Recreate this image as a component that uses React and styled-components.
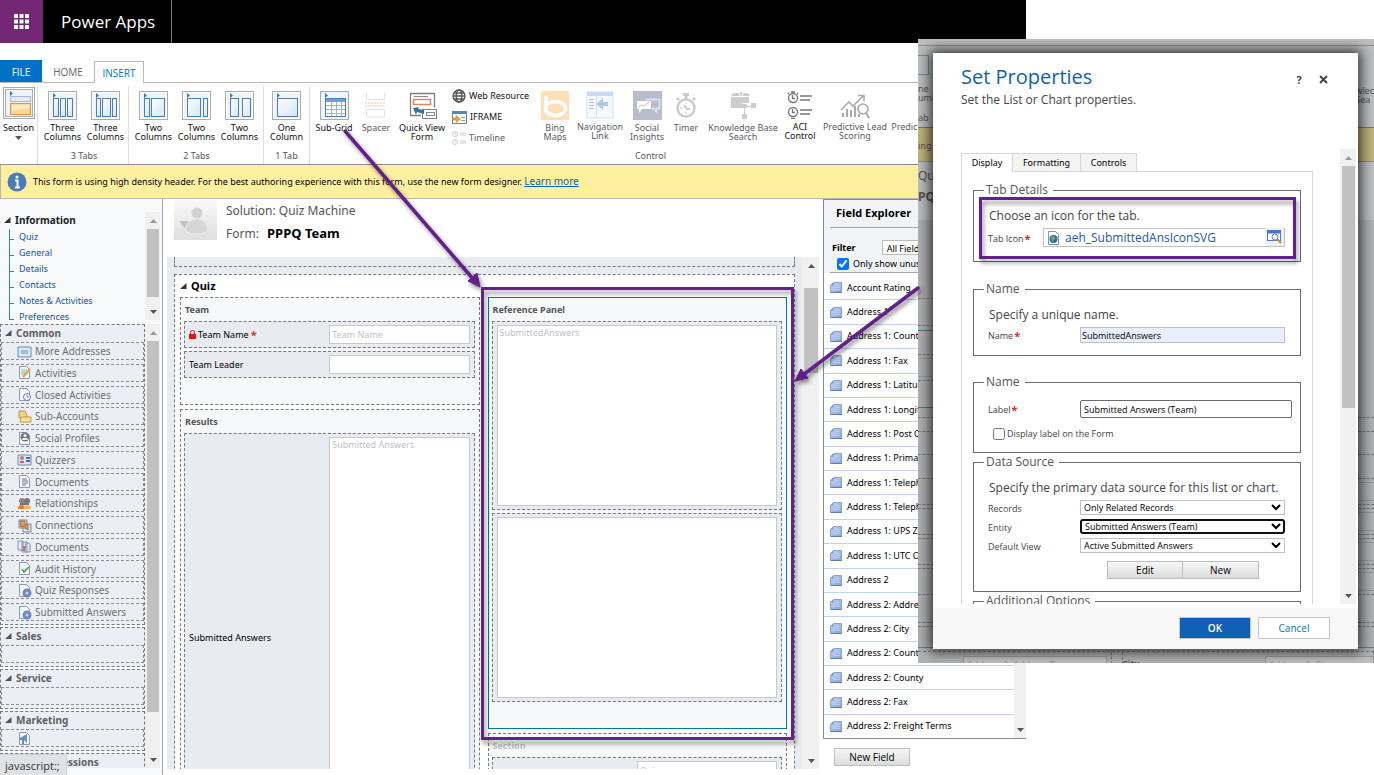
import React from "react";
import styled, { createGlobalStyle, css } from "styled-components";

const GlobalStyle = createGlobalStyle`
  *, *::before, *::after { box-sizing: border-box; }
  body { margin: 0; background: #fff; color: #000; font: 10px/12px "Segoe UI", "Noto Sans", "Open Sans", sans-serif; overflow: hidden; }
  button, input, select, textarea { font: inherit; color: inherit; margin: 0; }
  h1, h2, h3, p, ul { margin: 0; padding: 0; }
  ul { list-style: none; }
`;

const dash = "1px dashed #7a7a7a";
const PURPLE = "#61208a";
const OPEN = '"Segoe UI", "Open Sans", sans-serif';

/* ---------- page frame ---------- */
const Page = styled.div`
  position: relative;
  height: 100vh;
  overflow: hidden;
`;
const Main = styled.div`
  height: 100%;
  margin-right: 348px;
  display: flex;
  flex-direction: column;
  overflow: hidden;
`;
const TopBar = styled.header`
  flex: none;
  display: flex;
  height: 43px;
  background: #000;
  color: #fff;
`;
const Waffle = styled.button`
  width: 43px;
  border: 0;
  padding: 0;
  display: grid;
  place-items: center;
  background: #742774;
`;
const Brand = styled.div`
  width: 129px;
  padding-left: 18px;
  border-right: 1px solid #777;
  font-family: ${OPEN};
  font-size: 17px;
  line-height: 43px;
  white-space: nowrap;
`;

/* ---------- ribbon ---------- */
const TabRow = styled.nav`
  flex: none;
  display: flex;
  align-items: flex-end;
  height: 40px;
  border-bottom: 1px solid #b6babf;
`;
const RibbonTab = styled.button`
  height: 22px;
  padding: 1px 0 0;
  width: ${(p) => p.$w}px;
  border: 1px solid transparent;
  border-bottom: 0;
  background: none;
  font-family: ${OPEN};
  color: #666;
  ${(p) => p.$kind === "file" && css`background: #0072c6; color: #fff; border-color: #0072c6;`}
  ${(p) => p.$kind === "active" && css`background: #fff; color: #0072c6; border-color: #b6babf; margin-bottom: -1px;`}
`;
const Ribbon = styled.div`
  flex: none;
  display: flex;
  height: 82px;
  padding: 3px 0 0;
  overflow: hidden;
  border-bottom: 1px solid #8a8d92;
`;
const Group = styled.section`
  flex: none;
  display: flex;
  flex-direction: column;
  justify-content: space-between;
  padding: ${(p) => p.$pad || 0};
  border-right: 1px solid #dcdfe2;
`;
const Tools = styled.div`
  display: flex;
`;
const GroupName = styled.h3`
  font-weight: 400;
  font-size: 9px;
  line-height: 12px;
  color: #555;
  text-align: center;
  height: 14px;
`;
const Tool = styled.button`
  width: ${(p) => p.$w}px;
  border: 0;
  background: none;
  padding: 5px 0 0;
  display: flex;
  flex-direction: column;
  align-items: center;
  gap: 3px;
  font-size: 9px;
  line-height: 9px;
  white-space: pre;
  color: ${(p) => (p.$off ? "#5b5b66" : "#111")};
  & > svg { flex: none; }
`;
const SectionTool = styled(Tool)`
  padding-top: 1px;
  gap: 4px;
`;
const ToolFrame = styled.span`
  border: 1px solid #a9a9a9;
  padding: 1px;
  display: block;
  svg { display: block; }
`;
const SmallTools = styled.div`
  width: 91px;
  padding: 2px 0 0 5px;
  display: flex;
  flex-direction: column;
  gap: 5px;
`;
const SmallTool = styled.button`
  display: flex;
  align-items: center;
  gap: 3px;
  height: 16px;
  border: 0;
  padding: 0;
  background: none;
  font-size: 9px;
  white-space: nowrap;
  color: ${(p) => (p.$off ? "#5b5b66" : "#111")};
`;
const Notice = styled.div`
  flex: none;
  height: 34px;
  display: flex;
  align-items: center;
  gap: 6px;
  padding-left: 6px;
  background: #fff0a0;
  border-left: 1px solid #b5b5b5;
  border-bottom: 1px solid #b8b8b8;
  font-size: 9px;
  white-space: nowrap;
  a { color: #0066b8; font-size: 10px; }
`;

/* ---------- body ---------- */
const Body = styled.div`
  flex: 1;
  min-height: 0;
  display: flex;
`;
const Sidebar = styled.aside`
  flex: none;
  width: 163px;
  border-right: 1px solid #a0a7b0;
  background: #f7f9fb;
  padding: 13px 2px 7px 0;
  display: flex;
  flex-direction: column;
  gap: 4px;
`;
const Pane = styled.div`
  display: flex;
  min-height: 0;
  overflow: hidden;
  ${(p) => (p.$grow ? "flex: 1;" : "flex: none; height: 108px;")}
`;
const PaneContent = styled.div`
  flex: 1;
  min-width: 0;
  overflow: hidden;
`;
const Heading = styled.h2`
  display: flex;
  align-items: center;
  gap: 4px;
  padding-left: 4px;
  height: 16px;
  margin-bottom: 1px;
  font-size: 10px;
  font-weight: 700;
  color: ${(p) => (p.$dim ? "#5e6063" : "#222")};
`;
const Tree = styled.ul`
  margin-left: 9px;
  border-left: 1px solid #1e88d2;
  li { display: flex; align-items: center; height: 16px; }
  li::before { content: ""; width: 4px; height: 1px; margin: 5px 5px 0 0; background: #1e88d2; }
  a { color: #1353a8; font-size: 9px; text-decoration: none; white-space: nowrap; }
`;
const NavGroup = styled.section`
  border: ${dash};
  margin-bottom: 2px;
  background: #ebeff5;
`;
const NavItems = styled.ul`
  display: flex;
  flex-direction: column;
  justify-content: space-between;
  height: ${(p) => (p.$n > 1 ? 279 : 18)}px;
  margin-bottom: 3px;
`;
const NavItem = styled.li`
  display: flex;
  align-items: center;
  gap: 3px;
  height: 18px;
  padding-left: 15px;
  border: 1px dashed #8d8f92;
  color: #6e7073;
  font-size: 10px;
  white-space: nowrap;
`;

const Bar = styled.div`
  flex: none;
  width: ${(p) => p.$w || 15}px;
  padding: 0 1px 0 2px;
  display: flex;
  flex-direction: column;
  background: #f0f0f0;
`;
const Arrow = styled.span`
  flex: none;
  height: 17px;
  display: grid;
  place-items: center;
`;
const Thumb = styled.span`
  flex: ${(p) => p.$size} 1 0;
  background: #c1c1c1;
`;
const Rest = styled.span`
  flex: ${(p) => p.$size} 1 0;
`;

const Editor = styled.main`
  flex: 1;
  min-width: 0;
  padding: 0 4px 6px;
  display: flex;
  flex-direction: column;
`;
const FormHead = styled.div`
  flex: none;
  display: flex;
  gap: 9px;
  height: 58px;
  padding: 1px 0 0 7px;
  color: #555;
  font-size: 12px;
  line-height: 22px;
  b { color: #000; font-size: 13px; margin-left: 5px; }
`;
const Canvas = styled.div`
  flex: 1;
  min-height: 0;
  display: flex;
  overflow: hidden;
  background: #e8ebf0;
`;
const CanvasBody = styled.div`
  flex: 1;
  min-width: 0;
  overflow: hidden;
  padding: 0 7px;
`;
const Stub = styled.div`
  height: 10px;
  border: ${dash};
  border-top: 0;
  margin-bottom: 7px;
`;
const FormTab = styled.div`
  border: ${dash};
  border-bottom: 0;
  background: #fff;
  padding: 0 7px 0 5px;
  min-height: 600px;
`;
const FormTabTitle = styled.h2`
  display: flex;
  align-items: center;
  gap: 4px;
  height: 22px;
  font-size: 11px;
`;
const Columns = styled.div`
  display: grid;
  grid-template-columns: 1fr 1fr;
  gap: 8px;
`;
const Column = styled.div`
  display: flex;
  flex-direction: column;
  gap: 4px;
`;
const Section = styled.section`
  position: relative;
  background: #f7f8fa;
  border: ${(p) => (p.$selected ? "1px solid #0078a8" : dash)};
  padding: 4px 4px 26px 3px;
  display: flex;
  flex-direction: column;
  gap: 3px;
  & > h3 { font-size: 9px; line-height: 16px; color: ${(p) => (p.$dim ? "#c4c4c4" : "#555")}; padding-left: 1px; }
`;
const Field = styled.div`
  display: flex;
  align-items: center;
  height: ${(p) => p.$h}px;
  border: ${dash};
  background: #e8ebf0;
  padding: 3px 4px;
  font-size: 9px;
  & > label { flex: 1; display: flex; align-items: center; gap: 2px; }
  & > input, & > textarea {
    width: ${(p) => (p.$full ? "100%" : "50%")};
    height: 100%;
    border: 1px solid #c6c8cb;
    padding: 1px 2px;
    background: #fff;
    resize: none;
    font-size: 9px;
    border-radius: 0;
  }
  ::placeholder { color: #c2c2c2; }
`;
const Star = styled.span`
  color: #c33;
  font-weight: 700;
  align-self: flex-start;
  font-size: 11px;
  line-height: 11px;
`;

const Highlight = styled.div`
  position: absolute;
  inset: ${(p) => p.$inset};
  border: 3px solid ${PURPLE};
  filter: drop-shadow(2px 4px 2px rgba(0, 0, 0, 0.4));
  pointer-events: none;
  z-index: 2;
`;

/* ---------- field explorer ---------- */
const Side = styled.aside`
  flex: none;
  width: 203px;
  display: flex;
  flex-direction: column;
`;
const Explorer = styled.div`
  flex: 1;
  min-height: 0;
  display: flex;
  flex-direction: column;
  border: 1px solid #838a96;
  border-right: 0;
  background: #f2f3f6;
`;
const ExplorerTop = styled.div`
  flex: none;
  height: 73px;
  margin-left: 6px;
  padding-top: 5px;
  border-bottom: 1px solid #a2a6ad;
  font-size: 9px;
  h2 { font-size: 11px; font-family: ${OPEN}; line-height: 16px; height: 23px; padding-left: 6px; border-bottom: 1px solid #a2a6ad; }
`;
const FilterRow = styled.div`
  display: flex;
  align-items: center;
  gap: 26px;
  padding: 12px 0 1px 2px;
  label { font-weight: 700; font-size: 9px; }
  select { width: 120px; height: 15px; border: 1px solid #bbb; background: #fff; padding: 0; font-size: 9px; }
`;
const CheckRow = styled.label`
  display: flex;
  align-items: center;
  gap: ${(p) => p.$gap || 5}px;
  padding-left: ${(p) => p.$pad}px;
  height: 16px;
  color: ${(p) => p.$color || "#000"};
  font-size: 9px;
  input { width: 12px; height: 12px; }
`;
const FieldArea = styled.div`
  flex: 1;
  min-height: 0;
  display: flex;
  background: #fff;
`;
const FieldList = styled.ul`
  flex: 1;
  display: flex;
  flex-direction: column;
  padding-top: 3px;
  li {
    flex: 1 1 0;
    display: flex;
    align-items: center;
    gap: 5px;
    padding-left: 6px;
    border-bottom: 1px solid #b9d5f5;
    font-size: 9px;
    white-space: nowrap;
  }
  li:last-child { border-bottom: 0; }
`;
const SideFoot = styled.div`
  flex: none;
  height: 36px;
  padding: 9px 0 0 11px;
`;
const GreyButton = styled.button`
  width: 76px;
  height: 18px;
  padding: 0;
  border: 1px solid #b9bec4;
  background: linear-gradient(#f6f6f6, #e9e9e9 55%, #dadada);
  font-family: ${OPEN};
  & + & { border-left: 0; }
`;
const Status = styled.div`
  position: absolute;
  left: 0;
  bottom: 0;
  width: 67px;
  height: 21px;
  padding-left: 5px;
  background: #dfe2e7;
  border: 1px solid #cfd2d7;
  border-width: 1px 1px 0 0;
  border-radius: 0 3px 0 0;
  font-family: ${OPEN};
  font-size: 11px;
  line-height: 21px;
  color: #333;
`;

/* ---------- dialog overlay ---------- */
const Overlay = styled.div`
  position: absolute;
  top: 39px;
  right: 0;
  width: 456px;
  height: 624px;
  padding: 14px 16px 14px 15px;
  overflow: hidden;
  background: #bdbebf;
`;
const Backdrop = styled.div`
  position: absolute;
  inset: 0;
  display: flex;
  flex-direction: column;
  color: #555;
  font-size: 9px;
  line-height: 9px;
`;
const Band = styled.div`
  flex: none;
  height: ${(p) => p.$h}px;
  background: ${(p) => p.$bg || "transparent"};
  border-bottom: 1px solid ${(p) => p.$line || "transparent"};
  display: flex;
  justify-content: space-between;
  overflow: hidden;
`;
const Scrap = styled.div`
  padding-top: ${(p) => p.$top}px;
  font-size: ${(p) => p.$size || 9}px;
  line-height: ${(p) => p.$lh || 9}px;
  p + p { margin-top: ${(p) => p.$gap || 0}px; }
`;
const GhostTab = styled.div`
  width: 12px;
  height: 20px;
  margin: 9px 0 9px -1px;
  border: 1px solid #7a8c99;
`;
const Strip = styled.div`
  width: 16px;
  display: flex;
  flex-direction: column;
`;
const Rule = styled.div`
  flex: none;
  height: ${(p) => p.$h}px;
  border-bottom: 1px ${(p) => (p.$kind === "d" ? "dashed #777" : p.$kind === "b" ? "solid #3c7f98" : "solid #989898")};
`;
const GhostRow = styled.div`
  flex: 1;
  display: grid;
  grid-template-columns: 194px 4px 1fr;
  background: #b1b2b4;
  border-top: 1px dashed #777;
`;
const GhostCell = styled.div`
  border-right: 1px dashed #777;
  padding: 4px 4px 0 6px;
  display: flex;
  align-items: flex-start;
  overflow: hidden;
  & > b { flex: none; width: 143px; padding-top: 3px; }
  & > span { flex: 1; }
`;
const GhostInput = styled.div`
  width: 144px;
  height: 18px;
  flex: none;
  border: 1px solid #999;
  background: #bfbfbf;
  padding: 3px;
  color: #929292;
  white-space: nowrap;
`;
const Dialog = styled.div`
  position: relative;
  height: 100%;
  background: #fff;
  box-shadow: 0 0 12px 3px rgba(0, 0, 0, 0.75);
  display: flex;
  flex-direction: column;
`;
const DialogHead = styled.div`
  flex: none;
  height: 96px;
  padding: 12px 28px 0;
  display: flex;
  justify-content: space-between;
  color: #444;
  font-family: ${OPEN};
  font-size: 12px;
  line-height: 18px;
  h1 { font-size: 20px; line-height: 24px; font-weight: 400; color: #1160b7; margin-bottom: 2px; }
`;
const HeadButtons = styled.div`
  display: flex;
  gap: 10px;
  padding-top: 6px;
  button { width: 14px; height: 16px; border: 0; padding: 0; background: none; font-size: 11px; font-weight: 700; color: #444; }
`;
const DialogScroll = styled.div`
  flex: 1;
  min-height: 0;
  display: flex;
  justify-content: space-between;
  overflow: hidden;
  padding: 0 2px 0 28px;
`;
const Sheet = styled.div`
  width: 352px;
  padding-top: 4px;
`;
const SheetTabs = styled.div`
  display: flex;
  position: relative;
  margin-bottom: -1px;
`;
const SheetTab = styled.button`
  height: 19px;
  padding: 0;
  width: ${(p) => p.$w}px;
  border: 1px solid #d6d6d6;
  border-left-width: ${(p) => (p.$on ? 1 : 0)}px;
  border-bottom-color: ${(p) => (p.$on ? "#fff" : "#d6d6d6")};
  background: ${(p) => (p.$on ? "#fff" : "#f3f3f3")};
  font-size: 9px;
`;
const SheetBody = styled.div`
  border: 1px solid #d6d6d6;
  border-bottom: 0;
  padding: 9px 11px 0;
`;
const Fieldset = styled.fieldset`
  position: relative;
  min-width: 0;
  margin: 0 0 ${(p) => p.$after || 0}px;
  padding: ${(p) => p.$top || 0}px 15px ${(p) => p.$bottom || 12}px 14px;
  border: 1px solid #6b6b6b;
  font-family: ${OPEN};
  legend { padding: 0 5px 0 2px; margin-left: -4px; font-size: 12px; line-height: 18px; color: #555; }
  p { font-size: 12px; line-height: 18px; color: #444; padding: 8px 0 0 1px; height: 29px; white-space: nowrap; }
`;
const Line = styled.div`
  display: grid;
  grid-template-columns: ${(p) => p.$label || 92}px 1fr;
  align-items: center;
  margin-bottom: ${(p) => p.$after || 0}px;
  & > label { display: flex; align-items: center; gap: 1px; font-size: 9px; color: #444; padding-top: 2px; }
`;
const Text = styled.input`
  width: ${(p) => (p.$wide ? "calc(100% + 7px)" : "100%")};
  height: ${(p) => (p.$wide ? 18 : 16)}px;
  padding: 0 ${(p) => (p.$wide ? 3 : 1)}px;
  font-size: 9px;
  border: 1px solid ${(p) => (p.$wide ? "#6b6b6b" : "#c0c0c0")};
  border-radius: ${(p) => (p.$wide ? 2 : 0)}px;
  background: ${(p) => (p.$filled ? "#e8effd" : "#fff")};
`;
const Lookup = styled.div`
  display: flex;
  align-items: center;
  height: 19px;
  border: 1px solid #c0c0c0;
  padding-left: 3px;
  gap: 5px;
  a { flex: 1; font-size: 12px; color: #1f57ad; text-decoration: none; }
  button { width: 19px; height: 19px; border: 0; border-bottom: 1px solid #c0c0c0; padding: 0; display: grid; place-items: center; background: #eef0f4; }
`;
const SelectBox = styled.div`
  position: relative;
  height: 15px;
  select {
    display: block;
    width: 100%;
    height: 15px;
    padding: 0 3px;
    appearance: none;
    background: #fff;
    border: ${(p) => (p.$focus ? "2px solid #101010" : "1px solid #c0c0c0")};
    border-radius: ${(p) => (p.$focus ? 3 : 0)}px;
    font-size: 9px;
    line-height: 11px;
  }
  svg { position: absolute; right: 4px; top: 4px; pointer-events: none; }
`;
const Pair = styled.div`
  display: flex;
  justify-content: center;
  padding: 8px 0 0 62px;
  margin-right: -26px;
  width: 328px;
`;
const DialogFoot = styled.div`
  flex: none;
  height: 41px;
  margin-top: 4px;
  padding: 9px 28px 0;
  display: flex;
  justify-content: flex-end;
  gap: 7px;
  background: #f8f8f8;
`;
const FootButton = styled.button`
  width: 72px;
  height: 22px;
  padding: 0;
  border: 1px solid #c6c6c6;
  font-family: ${OPEN};
  background: ${(p) => (p.$primary ? "#1160b7" : "#fff")};
  color: ${(p) => (p.$primary ? "#fff" : "#0072c6")};
  font-weight: ${(p) => (p.$primary ? 600 : 400)};
`;
const Arrows = styled.svg`
  position: absolute;
  inset: 0;
  pointer-events: none;
`;

/* ---------- drawings ---------- */
const LayoutIcon = ({ bars }) => (
  <svg width="29" height="29" viewBox="0 0 29 29">
    <defs>
      <linearGradient id="cell" x1="0" y1="0" x2="1" y2="1"><stop offset="0" stopColor="#fff" /><stop offset="1" stopColor="#d4e4f8" /></linearGradient>
    </defs>
    <rect x=".5" y=".5" width="28" height="28" fill="#eef4fb" stroke="#a9abae" />
    <rect x="1.5" y="1.5" width="26" height="26" fill="none" stroke="#fff" />
    <path d="M5 2v5l3-2.5z" fill="#3c78b8" />
    {bars.map(([x, w]) => <rect key={x} x={x + 0.5} y="7.5" width={w} height="18" fill="url(#cell)" stroke="#4a7fb5" />)}
  </svg>
);
const SectionIcon = () => (
  <svg width="28" height="28" viewBox="0 0 28 28">
    <rect x=".5" y=".5" width="27" height="27" fill="#eef3fa" stroke="#a9abae" />
    <path d="M5 2v5l3-2.5z" fill="#3c78b8" />
    <rect x="5.5" y="7.500" width="20" height="5" fill="#e4ebf7" stroke="#a9b9d4" />
    <rect x="5.500" y="14.500" width="20" height="11" fill="#fbd793" stroke="#d69a45" />
    <path d="M7 16h17v3L7 22z" fill="#fde9c3" />
  </svg>
);
const GridIcon = () => (
  <svg width="29" height="29" viewBox="0 0 29 29">
    <rect x=".5" y=".5" width="28" height="28" fill="#eef4fb" stroke="#a9abae" />
    <path d="M5 2v5l3-2.5z" fill="#3c78b8" />
    <rect x="5.500" y="7.500" width="20" height="18" fill="#fff" stroke="#4a7fb5" />
    <rect x="6" y="8" width="19" height="3" fill="#6f9ed0" />
    <path d="M6 14.500h19M6 18.500h19M6 22.500h19M11.500 11v14M16.500 11v14M21.500 11v14" stroke="#9db4cc" />
  </svg>
);
const SpacerIcon = () => (
  <svg width="22" height="29" viewBox="0 0 22 29" fill="none">
    <path d="M1.500 2v6.500h18V2M1.500 18.500h18V26h-18z" stroke="#e2e2e2" />
    <path d="M0 12h21M0 15h21" stroke="#fae0cd" strokeWidth="2" strokeDasharray="2 1" />
  </svg>
);
const QuickIcon = () => (
  <svg width="29" height="29" viewBox="0 0 29 29" fill="none">
    <path d="M13 24.500H2.500v-22h24v14" stroke="#808080" fill="#fff" strokeWidth="1.300" />
    <path d="M6 5.500h14" stroke="#888" />
    <rect x="5.500" y="8.500" width="17" height="5" stroke="#d98a5b" strokeWidth="1.500" />
    <rect x="14.500" y="18.500" width="14" height="9" fill="#fff" stroke="#808080" />
    <rect x="18.500" y="21.500" width="8" height="3" stroke="#888" />
    <path d="M5 17l6-1-1 2 6 1v4l-7-2-1 3z" fill="#38729f" />
  </svg>
);
const GlobeIcon = () => (
  <svg width="14" height="14" viewBox="0 0 14 14" fill="none" stroke="#555" strokeWidth="1.300">
    <circle cx="7" cy="7" r="6" /><ellipse cx="7" cy="7" rx="2.800" ry="6" /><path d="M1 7h12M2 4h10M2 10h10" />
  </svg>
);
const IframeIcon = () => (
  <svg width="15" height="13" viewBox="0 0 15 13">
    <rect x=".5" y=".5" width="14" height="12" fill="#fff" stroke="#5b87b8" /><path d="M1 2h13" stroke="#5b87b8" strokeWidth="2" />
    <path d="M9 6.500h4M9 9.500h4" stroke="#8aa" /><path d="M0 7h4V4.500L8.500 8 4 11.500V9H0z" fill="#e8a33a" stroke="#b97a1a" strokeWidth=".5" />
  </svg>
);
const TimelineIcon = () => (
  <svg width="14" height="16" viewBox="0 0 14 16" fill="none" stroke="#cdcdcd">
    <circle cx="3" cy="4" r="2.500" /><circle cx="3" cy="12" r="2.500" /><path d="M3 2.500V4h1M3 10.500V12h1M8 3h6M8 5h6M8 11h6M8 13h6" />
  </svg>
);
const BingIcon = () => (
  <svg width="28" height="29" viewBox="0 0 28 29">
    <rect width="28" height="29" fill="#ffdfb5" />
    <path d="M5 5v13" stroke="#fff" strokeWidth="3.500" /><ellipse cx="14.500" cy="17.500" rx="10" ry="7" fill="none" stroke="#fff" strokeWidth="3.500" />
  </svg>
);
const NavIcon = () => (
  <svg width="28" height="28" viewBox="0 0 28 28">
    <rect x="1" y="1" width="26" height="26" fill="#f6f9fe" stroke="#d3ddf0" /><path d="M1 3h26" stroke="#ccd9f3" strokeWidth="4" />
    <path d="M10.500 5v22" stroke="#d3ddf0" /><path d="M3 8.500h5M3 11.500h5M3 14.500h5M3 17.500h5" stroke="#aebde0" />
    <path d="M10 13l7-6v4h5v4h-5v4z" fill="#b4c6ea" />
  </svg>
);
const SocialIcon = () => (
  <svg width="29" height="29" viewBox="0 0 29 29">
    <rect width="29" height="29" fill="#b9bdcb" />
    <path d="M12.500 8.500h14v9h-3v3l-3-3h-2" fill="none" stroke="#dde0e9" strokeWidth="2" />
    <path d="M4 10h14v8H9l-3 4v-4H4z" fill="#fff" /><path d="M6 16l3-2 2 1 5-4" fill="none" stroke="#b9bdcb" />
  </svg>
);
const TimerIcon = () => (
  <svg width="22" height="29" viewBox="0 0 22 29" fill="none" stroke="#cbcbcb" strokeWidth="2">
    <circle cx="11" cy="17" r="8.500" strokeWidth="2.500" /><path d="M11 5v4M8 3.500h6M2 9l2-2M20 9l-2-2" strokeWidth="3" /><path d="M9 14l3 4h3" /><path d="M11 11v2M11 21v2M5 17h2" strokeWidth="1" />
  </svg>
);
const KnowledgeIcon = () => (
  <svg width="27" height="29" viewBox="0 0 27 29" fill="#cdcdcd">
    <path d="M1 5l2-3h6v3zM10 1h2v4h-2zM13 2h5l2 3h-7zM1 6h18v6h-7v5H1z" /><path d="M15 15.500h7M14.500 15v9" fill="none" stroke="#cdcdcd" />
    <path d="M12 13h5v4h-5zM21 12h5v5h-5zM12 23h5v5h-5z" />
  </svg>
);
const AciIcon = () => (
  <svg width="26" height="28" viewBox="0 0 26 28" fill="none" stroke="#777" strokeWidth="1.300">
    <circle cx="6" cy="7" r="4.500" /><circle cx="6" cy="21" r="4.500" /><path d="M4 1h4M6 1v1M5.500 4v3.500H8M4 27.500h4M5.500 18v3.500H8M1 3l1-1M11 3l-1-1" />
    <path d="M13 5h12M13 9h10M13 19h12M13 23h10" strokeWidth="1.500" />
  </svg>
);
const LeadIcon = () => (
  <svg width="30" height="28" viewBox="0 0 30 28" fill="none" stroke="#ababab" strokeWidth="1.600">
    <path d="M1 19l8-8 4 4 10-10M18 4.500h6v6" /><path d="M3 26v-4M7 26v-8M11 26v-7M15 26V15M19 26v-3" strokeWidth="2" /><circle cx="23" cy="18" r="5" fill="#fff" /><path d="M26 22l3 5" strokeWidth="2" />
  </svg>
);
const InfoIcon = () => (
  <svg width="20" height="20" viewBox="0 0 20 20">
    <circle cx="10" cy="10" r="9.500" fill="#4a7db6" /><circle cx="10" cy="5" r="1.500" fill="#fff" /><path d="M8 8.500h2.500v7M8 15.500h5" fill="none" stroke="#fff" strokeWidth="2" />
  </svg>
);
const Twisty = ({ c = "#555" }) => <svg width="7" height="7" viewBox="0 0 7 7"><path d="M6.500 0v6H0z" fill={c} /></svg>;
const Tri = ({ up, c = "#555" }) => <svg width="7" height="4" viewBox="0 0 7 4"><path d={up ? "M0 4h7L3.500 0z" : "M0 0h7L3.500 4z"} fill={c} /></svg>;
const Chevron = () => <svg width="10" height="7" viewBox="0 0 10 7"><path d="M1 1l4 4 4-4" fill="none" stroke="#000" strokeWidth="2" /></svg>;
const FieldIcon = () => (
  <svg width="12" height="11" viewBox="0 0 12 11">
    <defs><linearGradient id="fg" x1="0" y1="0" x2="1" y2="1"><stop offset="0" stopColor="#c6d6f4" /><stop offset="1" stopColor="#86a5dd" /></linearGradient></defs>
    <path d="M3.500 .5h8v10H.5V3.500z" fill="url(#fg)" stroke="#8aa3d0" /><path d="M1 10.500h11" stroke="#5d7dba" /><path d="M4 3.500h6M3 5.500h7M3 7.500h7" stroke="#b9cbef" /><path d="M.5 3.500h3v-3" fill="#7d93b8" />
  </svg>
);
const LockIcon = () => (
  <svg width="7" height="9" viewBox="0 0 7 9"><path d="M1.500 4V2.500a2 2 0 014 0V4" fill="none" stroke="#e11" /><rect y="4" width="7" height="5" fill="#e11" /></svg>
);
const Portrait = () => (
  <svg width="43" height="40" viewBox="0 0 43 40">
    <defs><linearGradient id="pg" x1="0" y1="0" x2="0" y2="1"><stop offset="0" stopColor="#f9f9f9" /><stop offset="1" stopColor="#dedede" /></linearGradient></defs>
    <rect width="43" height="40" fill="url(#pg)" />
    <path d="M5 21l9 0 3 3-5 6z" fill="#c2c2c2" />
    <circle cx="23" cy="13" r="5.500" fill="#d2d2d2" /><path d="M11 31c1-16 22-16 23 0-7 4-16 4-23 0z" fill="#d6d6d6" stroke="#ececec" />
  </svg>
);
const paper = <path d="M2.500 1.500h7l3 3v9h-10z" fill="#f3f6fb" stroke="#8c9bb5" />;
const NAV_ART = {
  card: <><path d="M1 3h13v10H1z" fill="#dce5f3" stroke="#6f89b0" /><path d="M4 6h7v4H4z" fill="#a9b9d2" /></>,
  note: <>{paper}<path d="M4 5h6M4 7h5M4 9h4" stroke="#9aa" /><path d="M6 12l7-8" stroke="#d8a540" strokeWidth="2" /></>,
  clock: <>{paper}<circle cx="10" cy="10" r="3.500" fill="#fff" stroke="#6f74b8" /><path d="M10 8v2h2" fill="none" stroke="#6f74b8" /></>,
  folder: <><path d="M2 2h6l3 7H2z" fill="#f0d58a" stroke="#b99a4c" /><path d="M4 8h10v5H3z" fill="#ffe08c" stroke="#b99a4c" /></>,
  person: <>{paper}<circle cx="8" cy="6" r="4.500" fill="#777" /><circle cx="8" cy="4.500" r="1.500" fill="#eee" /><path d="M5 9c0-3 6-3 6 0" fill="#eee" /></>,
  contact: <><path d="M1 3h13v10H1z" fill="#dce5f3" stroke="#6f89b0" /><circle cx="5" cy="6" r="2" fill="#a86" /><path d="M3 11V9h4v2z" fill="#c66" /><path d="M9 6h4M9 9h4" stroke="#4a6ea8" strokeWidth="2" /></>,
  doc: <>{paper}<path d="M5 5h5M5 7h6M5 9h6M5 11h4" stroke="#777" /></>,
  rel: <><circle cx="5" cy="5" r="3" fill="#888" /><circle cx="10" cy="5" r="3" fill="#777" /><path d="M1 13c0-6 7-5 7 0z" fill="#e2803a" /><path d="M7 13c0-5 7-5 7 0z" fill="#ecb94a" /><path d="M3 7h9v2H3z" fill="#777" /></>,
  conn: <><path d="M2 2h8v8H2zM6 6h8v8H6z" fill="#dfe6f2" stroke="#6f86aa" /><path d="M3 3h5v4h3v5l-3-2V8L4 9z" fill="#e69a55" stroke="#b96d2b" /></>,
  docs: <><path d="M1 2h5v9H1zM5 3h5v10H5zM9 3l4 2v8H8z" fill="#e8eef6" stroke="#7f93b2" /><path d="M7 7v5" stroke="#d66" strokeWidth="2" /></>,
  audit: <>{paper}<path d="M5 8l2 3 5-5" fill="none" stroke="#4f9a4b" strokeWidth="1.500" /></>,
  gear: <>{paper}<circle cx="10" cy="10" r="3" fill="#c6d1ec" stroke="#7288c0" strokeWidth="3" /></>,
  horn: <>{paper}<path d="M3 7l7-4v9L7 9v4H5V9H3z" fill="#6f8cc0" /></>,
};
const NavIconArt = ({ k }) => <svg width="15" height="15" viewBox="0 0 15 15">{NAV_ART[k]}</svg>;

/* ---------- data ---------- */
const NAV = [
  ["Common", [["card", "More Addresses"], ["note", "Activities"], ["clock", "Closed Activities"], ["folder", "Sub-Accounts"], ["person", "Social Profiles"], ["contact", "Quizzers"], ["doc", "Documents"], ["rel", "Relationships"], ["conn", "Connections"], ["docs", "Documents"], ["audit", "Audit History"], ["gear", "Quiz Responses"], ["gear", "Submitted Answers"]]],
  ["Sales", [[null, ""]]],
  ["Service", [[null, ""]]],
  ["Marketing", [["horn", ""]]],
  ["Process Sessions", [[null, ""]]],
];
const FIELDS = ["Account Rating", "Address 1", "Address 1: Country/Region", "Address 1: Fax", "Address 1: Latitude", "Address 1: Longitude", "Address 1: Post Office Box", "Address 1: Primary Contact", "Address 1: Telephone 2", "Address 1: Telephone 3", "Address 1: UPS Zone", "Address 1: UTC Offset", "Address 2", "Address 2: Address Type", "Address 2: City", "Address 2: Country/Region", "Address 2: County", "Address 2: Fax", "Address 2: Freight Terms"];

const RULES = [[79, "d"], [27, "d"], [5, "b"], [24, "d"], [4, "s"], [18, "s"], [4, "d"], [27, "b"], [10, "d"], [14, "d"], [23, "d"], [24, "d"], [26, "d"], [4, "d"], [26, "d"], [4, "d"], [26, "d"], [4, "d"], [26, "d"], [28, "d"], [4, "d"]];
const RULES_RIGHT = [[198, "d"], [14, "d"], [23, "d"], [24, "d"], [4, "s"], [18, "s"], [4, "d"], [4, "d"], [4, "s"], [18, "s"], [4, "d"], [4, "d"], [4, "s"], [18, "s"], [4, "d"], [4, "d"], [4, "s"], [18, "s"], [4, "d"], [28, "d"], [4, "d"]];

const Scroll = ({ before = 0, size, after, w, dim, track = true }) => (
  <Bar $w={w} aria-hidden="true">
    <Arrow><Tri up c={dim ? "#999" : "#555"} /></Arrow>
    <Rest $size={before} />
    {track && <Thumb $size={size} />}
    <Rest $size={after} />
    <Arrow><Tri /></Arrow>
  </Bar>
);

const Dropdown = ({ id, label, value, focus, after }) => (
  <Line $after={after}>
    <label htmlFor={id}>{label}</label>
    <SelectBox $focus={focus}>
      <select id={id} defaultValue={value}><option>{value}</option></select>
      <Chevron />
    </SelectBox>
  </Line>
);

function PropertiesDialog() {
  return (
    <Dialog role="dialog" aria-label="Set Properties">
      <DialogHead>
        <div>
          <h1>Set Properties</h1>
          <p>Set the List or Chart properties.</p>
        </div>
        <HeadButtons>
          <button aria-label="Help">?</button>
          <button aria-label="Close"><svg width="9" height="9" viewBox="0 0 9 9"><path d="M1 1l7 7M8 1L1 8" stroke="#444" strokeWidth="2" /></svg></button>
        </HeadButtons>
      </DialogHead>
      <DialogScroll>
        <Sheet>
          <SheetTabs>
            <SheetTab $on $w={52}>Display</SheetTab>
            <SheetTab $w={68}>Formatting</SheetTab>
            <SheetTab $w={56}>Controls</SheetTab>
          </SheetTabs>
          <SheetBody>
            <Fieldset $bottom={14} $after={18}>
              <legend>Tab Details</legend>
              <p>Choose an icon for the tab.</p>
              <Line $label={55}>
                <label>Tab Icon<Star>*</Star></label>
                <Lookup>
                  <svg width="13" height="14" viewBox="0 0 13 14"><path d="M1.500.5h7l3 3v10h-10z" fill="#fff" stroke="#7d93b2" /><circle cx="6.500" cy="8" r="4" fill="#2f6f9e" /><path d="M4 6l3-1 1 3-3 3z" fill="#67b36a" /></svg>
                  <a href="#icon">aeh_SubmittedAnsIconSVG</a>
                  <button aria-label="Look up">
                    <svg width="15" height="14" viewBox="0 0 15 14"><rect x=".5" y=".5" width="13" height="10" fill="#fff" stroke="#4a7fc1" /><path d="M0 2h14" stroke="#3e78c8" strokeWidth="3" /><circle cx="8" cy="7" r="3" fill="#e6f0fb" stroke="#789" /><path d="M10 9l4 4" stroke="#c98a3a" strokeWidth="2" /></svg>
                  </button>
                </Lookup>
              </Line>
              <Highlight $inset="-2px 4px 2px 5px" />
            </Fieldset>
            <Fieldset $bottom={12} $after={17}>
              <legend>Name</legend>
              <p>Specify a unique name.</p>
              <Line>
                <label htmlFor="uname">Name<Star>*</Star></label>
                <Text id="uname" $filled defaultValue="SubmittedAnswers" />
              </Line>
            </Fieldset>
            <Fieldset $top={9} $bottom={10}>
              <legend>Name</legend>
              <Line $after={8}>
                <label htmlFor="ulabel">Label<Star>*</Star></label>
                <Text id="ulabel" $wide defaultValue="Submitted Answers (Team)" />
              </Line>
              <CheckRow $pad={5} $gap={2} $color="#444"><input type="checkbox" />Display label on the Form</CheckRow>
            </Fieldset>
            <Fieldset $bottom={12}>
              <legend>Data Source</legend>
              <p>Specify the primary data source for this list or chart.</p>
              <Dropdown id="records" label="Records" value="Only Related Records" after={4} />
              <Dropdown id="entity" label="Entity" value="Submitted Answers (Team)" focus after={4} />
              <Dropdown id="view" label="Default View" value="Active Submitted Answers" />
              <Pair><GreyButton>Edit</GreyButton><GreyButton>New</GreyButton></Pair>
            </Fieldset>
            <Fieldset>
              <legend>Additional Options</legend>
            </Fieldset>
          </SheetBody>
        </Sheet>
        <Scroll dim w={16} size={242} after={179} />
      </DialogScroll>
      <DialogFoot>
        <FootButton $primary>OK</FootButton>
        <FootButton>Cancel</FootButton>
      </DialogFoot>
    </Dialog>
  );
}

export default function App() {
  return (
    <Page>
      <GlobalStyle />
      <Main>
        <TopBar>
          <Waffle aria-label="App launcher">
            <svg width="15" height="15" viewBox="0 0 15 15" fill="#fff">
              {[0, 5.5, 11].map((y) => [0, 5.5, 11].map((x) => <rect key={x + "-" + y} x={x} y={y} width="4" height="4" />))}
            </svg>
          </Waffle>
          <Brand>Power Apps</Brand>
        </TopBar>
        <TabRow>
          <RibbonTab $w={42} $kind="file">FILE</RibbonTab>
          <RibbonTab $w={52}>HOME</RibbonTab>
          <RibbonTab $w={50} $kind="active">INSERT</RibbonTab>
        </TabRow>
        <Ribbon>
          <Group>
            <SectionTool $w={37}><ToolFrame><SectionIcon /></ToolFrame>Section<Tri /></SectionTool>
          </Group>
          <Group $pad="0 1px 0 3px">
            <Tools>
              <Tool $w={43}><LayoutIcon bars={[[5, 5], [12, 5], [19, 5]]} />{"Three\nColumns"}</Tool>
              <Tool $w={43}><LayoutIcon bars={[[5, 4], [11, 8], [21, 4]]} />{"Three\nColumns"}</Tool>
            </Tools>
            <GroupName>3 Tabs</GroupName>
          </Group>
          <Group $pad="0 2px 0 3px">
            <Tools>
              <Tool $w={43}><LayoutIcon bars={[[5, 5], [12, 13]]} />{"Two\nColumns"}</Tool>
              <Tool $w={43}><LayoutIcon bars={[[5, 13], [21, 4]]} />{"Two\nColumns"}</Tool>
              <Tool $w={43}><LayoutIcon bars={[[5, 8], [17, 8]]} />{"Two\nColumns"}</Tool>
            </Tools>
            <GroupName>2 Tabs</GroupName>
          </Group>
          <Group $pad="0 1px">
            <Tools><Tool $w={43}><LayoutIcon bars={[[5, 20]]} />{"One\nColumn"}</Tool></Tools>
            <GroupName>1 Tab</GroupName>
          </Group>
          <Group $pad="0 3px">
            <Tools>
              <Tool $w={42}><GridIcon />Sub-Grid</Tool>
              <Tool $w={42} $off><SpacerIcon />Spacer</Tool>
              <Tool $w={50}><QuickIcon />{"Quick View\nForm"}</Tool>
              <SmallTools>
                <SmallTool><GlobeIcon />Web Resource</SmallTool>
                <SmallTool><IframeIcon />IFRAME</SmallTool>
                <SmallTool $off><TimelineIcon />Timeline</SmallTool>
              </SmallTools>
              <Tool $w={34} $off><BingIcon />{"Bing\nMaps"}</Tool>
              <Tool $w={56} $off><NavIcon />{"Navigation\nLink"}</Tool>
              <Tool $w={38} $off><SocialIcon />{"Social\nInsights"}</Tool>
              <Tool $w={40} $off><TimerIcon />Timer</Tool>
              <Tool $w={74} $off><KnowledgeIcon />{"Knowledge Base\nSearch"}</Tool>
              <Tool $w={40}><AciIcon />{"ACI\nControl"}</Tool>
              <Tool $w={70} $off><LeadIcon />{"Predictive Lead\nScoring"}</Tool>
              <Tool $w={98} $off><LeadIcon />{"Predictive Opportunity\nScoring"}</Tool>
            </Tools>
            <GroupName>Control</GroupName>
          </Group>
        </Ribbon>
        <Notice>
          <InfoIcon />
          <span>This form is using high density header. For the best authoring experience with this form, use the new form designer. <a href="#learn">Learn more</a></span>
        </Notice>
        <Body>
          <Sidebar>
            <Pane>
              <PaneContent>
                <Heading><Twisty c="#333" />Information</Heading>
                <Tree>
                  {["Quiz", "General", "Details", "Contacts", "Notes & Activities", "Preferences"].map((t) => <li key={t}><a href="#tab">{t}</a></li>)}
                </Tree>
              </PaneContent>
              <Scroll dim size={68} after={6} />
            </Pane>
            <Pane $grow>
              <PaneContent>
                {NAV.map(([title, items]) => (
                  <NavGroup key={title}>
                    <Heading $dim><Twisty />{title}</Heading>
                    <NavItems $n={items.length}>
                      {items.map(([k, t], i) => <NavItem key={i}>{k && <NavIconArt k={k} />}{t}</NavItem>)}
                    </NavItems>
                  </NavGroup>
                ))}
              </PaneContent>
              <Scroll dim size={371} after={39} />
            </Pane>
          </Sidebar>
          <Editor>
            <FormHead>
              <Portrait />
              <div>
                <p>Solution: Quiz Machine</p>
                <p>Form: <b>PPPQ Team</b></p>
              </div>
            </FormHead>
            <Canvas>
              <CanvasBody>
                <Stub />
                <FormTab>
                  <FormTabTitle><Twisty c="#333" />Quiz</FormTabTitle>
                  <Columns>
                    <Column>
                      <Section>
                        <h3>Team</h3>
                        <Field $h={27}><label htmlFor="team"><LockIcon />Team Name <Star>*</Star></label><input id="team" placeholder="Team Name" /></Field>
                        <Field $h={27}><label htmlFor="leader">Team Leader</label><input id="leader" /></Field>
                      </Section>
                      <Section>
                        <h3>Results</h3>
                        <Field $h={410}><label htmlFor="answers">Submitted Answers</label><textarea id="answers" placeholder="Submitted Answers" /></Field>
                      </Section>
                    </Column>
                    <Column>
                      <Section $selected>
                        <h3>Reference Panel</h3>
                        <Field $h={189} $full><textarea aria-label="Submitted answers" placeholder="SubmittedAnswers" /></Field>
                        <Field $h={189} $full><textarea aria-label="Reference" /></Field>
                        <Highlight $inset="-11px -8px -12px -8px" />
                      </Section>
                      <Section $dim>
                        <h3>Section</h3>
                        <Field $h={27}><label htmlFor="quizzers" /><input id="quizzers" placeholder="Quizzers" /></Field>
                      </Section>
                    </Column>
                  </Columns>
                </FormTab>
              </CanvasBody>
              <Scroll w={17} before={14} size={85} after={378} />
            </Canvas>
          </Editor>
          <Side>
            <Explorer>
              <ExplorerTop>
                <h2>Field Explorer</h2>
                <FilterRow><label htmlFor="filter">Filter</label><select id="filter"><option>All Fields</option></select></FilterRow>
                <CheckRow $pad={7} $gap={4}><input type="checkbox" defaultChecked />Only show unused fields</CheckRow>
              </ExplorerTop>
              <FieldArea>
                <FieldList>{FIELDS.map((f) => <li key={f}><FieldIcon />{f}</li>)}</FieldList>
                <Scroll w={12} track={false} size={1} after={1} />
              </FieldArea>
            </Explorer>
            <SideFoot><GreyButton>New Field</GreyButton></SideFoot>
          </Side>
        </Body>
      </Main>
      <Status>javascript:;</Status>
      <Overlay>
        <Backdrop aria-hidden="true">
          <Band $h={7} $line="#8e8e8e" />
          <Band $h={82} $line="#777">
            <Scrap $top={0}><GhostTab /><p>ne</p><p>umn</p><Scrap $top={11}>ab</Scrap></Scrap>
            <Scrap $top={40}><p>wlec</p><p>Sea</p></Scrap>
          </Band>
          <Band $h={34} $bg="#bfb478" $line="#8e8e8e"><Scrap $top={13}>ing</Scrap></Band>
          <Band $h={58}>
            <Scrap $top={7} $size={12} $lh={13} $gap={8}><p>Qui</p><p><b>PQ</b></p></Scrap>
          </Band>
          <Band $h={428} $bg="#afb0b2" $line="#777">
            <Strip>{RULES.map(([h, k], i) => <Rule key={i} $h={h} $kind={k} />)}</Strip>
            <Strip>{RULES_RIGHT.map(([h, k], i) => <Rule key={i} $h={h} $kind={k} />)}</Strip>
          </Band>
          <Band $h={3} $bg="#afb0b2" />
          <GhostRow>
            <GhostCell><span /><GhostInput>Address 1: Address Type</GhostInput></GhostCell>
            <GhostCell />
            <GhostCell><b>City</b><GhostInput>Address 1: City</GhostInput></GhostCell>
          </GhostRow>
        </Backdrop>
        <PropertiesDialog />
      </Overlay>
      <Arrows width="1026" height="775" viewBox="0 0 1026 775">
        <g fill={PURPLE} stroke={PURPLE} style={{ filter: "drop-shadow(2px 3px 2px rgba(0,0,0,.45))" }}>
          <path d="M345 131L474 280" strokeWidth="3.500" strokeLinecap="round" />
          <path d="M480 287l-12-6 9-8z" />
          <path d="M918 288L803 375" strokeWidth="3.500" strokeLinecap="round" />
          <path d="M795 381l6-12 7 9z" />
        </g>
      </Arrows>
    </Page>
  );
}
